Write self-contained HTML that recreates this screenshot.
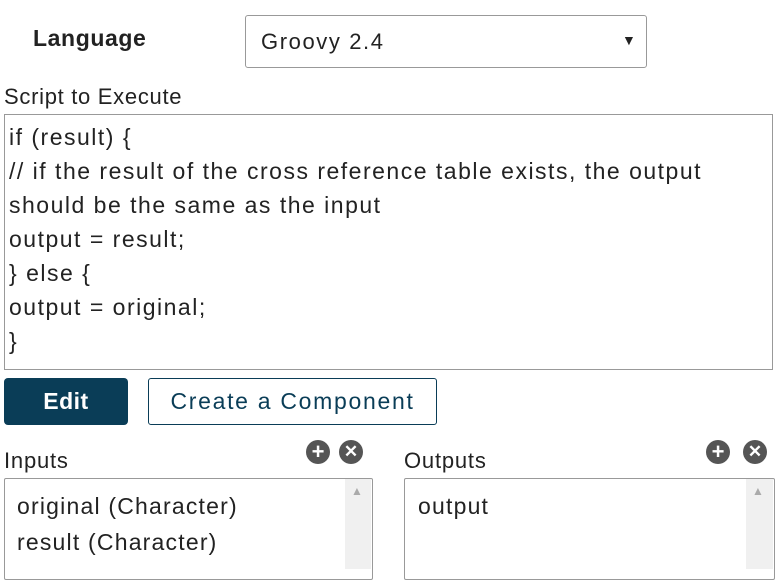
<!DOCTYPE html>
<html><head><style>
body{margin:0;width:779px;height:562px;overflow:hidden;background:#fff;font-family:"Liberation Sans",sans-serif;color:#222;position:relative}
.a{position:absolute;white-space:nowrap}
.ic{position:absolute;width:24px;height:24px;border-radius:50%;background:#555;color:#fff;font-weight:bold;text-align:center;line-height:24px;font-size:22px}
</style></head><body>
<div class="a" style="left:33px;top:25px;font-size:23px;font-weight:bold;letter-spacing:0.6px">Language</div>
<div class="a" style="left:245px;top:15px;width:400px;height:51px;border:1px solid #999;border-radius:3px"></div>
<div class="a" style="left:261px;top:29px;font-size:22px;letter-spacing:1.6px">Groovy 2.4</div>
<div class="a" style="left:622px;top:32px;font-size:14px">▼</div>
<div class="a" style="left:4px;top:84px;font-size:22px;letter-spacing:0.7px">Script to Execute</div>
<div class="a" style="left:4px;top:114px;width:767px;height:254px;border:1px solid #999"></div>
<div class="a" style="left:9px;top:120px;font-size:23px;line-height:34px;letter-spacing:1.5px">if (result) {<br>// if the result of the cross reference table exists, the output<br>should be the same as the input<br>output = result;<br>} else {<br>output = original;<br>}</div>
<div class="a" style="left:4px;top:378px;width:124px;height:47px;background:#0a3d57;border-radius:4px;color:#fff;font-size:23px;font-weight:bold;text-align:center;line-height:47px;letter-spacing:0.5px">Edit</div>
<div class="a" style="left:148px;top:378px;width:287px;height:45px;border:1px solid #0a3d57;border-radius:3px;color:#0a3d57;font-size:23px;text-align:center;line-height:45px;letter-spacing:1.7px">Create a Component</div>
<div class="ic" style="left:306px;top:440px">+</div><div class="ic" style="left:339px;top:440px;font-size:17px">✕</div>
<div class="ic" style="left:706px;top:440px">+</div><div class="ic" style="left:743px;top:440px;font-size:17px">✕</div>
<div class="a" style="left:4px;top:448px;font-size:22px;letter-spacing:0.8px">Inputs</div>
<div class="a" style="left:404px;top:448px;font-size:22px;letter-spacing:0.8px">Outputs</div>
<div class="a" style="left:4px;top:478px;width:367px;height:100px;border:1px solid #999;border-radius:2px"></div>
<div class="a" style="left:345px;top:479px;width:26px;height:90px;background:#f0f0f0"></div>
<div class="a" style="left:351px;top:484px;font-size:12px;color:#aaa">▲</div>
<div class="a" style="left:404px;top:478px;width:369px;height:100px;border:1px solid #999;border-radius:2px"></div>
<div class="a" style="left:746px;top:479px;width:27px;height:90px;background:#f0f0f0"></div>
<div class="a" style="left:752px;top:484px;font-size:12px;color:#aaa">▲</div>
<div class="a" style="left:17px;top:488px;font-size:23px;line-height:36px;letter-spacing:1.2px">original (Character)<br>result (Character)</div>
<div class="a" style="left:418px;top:488px;font-size:23px;line-height:36px;letter-spacing:1.2px">output</div>
</body></html>
